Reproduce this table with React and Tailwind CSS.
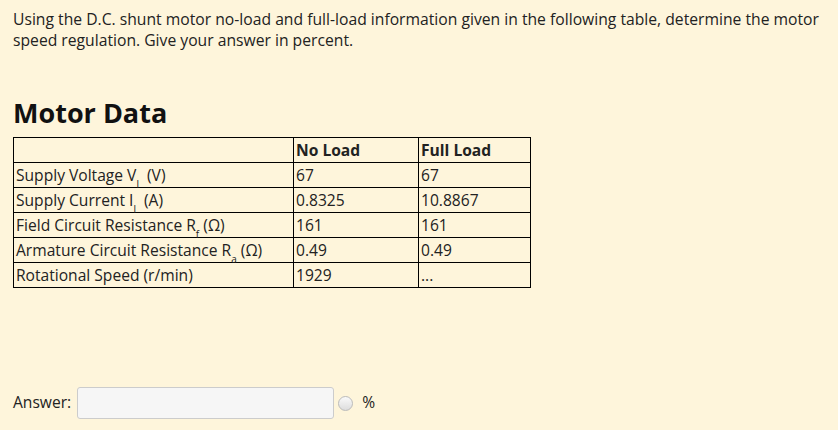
import React from 'react';

const rows = [
  { label: <>Supply Voltage V<sub className="text-[10px] align-[-4px] mr-1">l</sub> (V)</>, noLoad: '67', fullLoad: '67' },
  { label: <>Supply Current I<sub className="text-[10px] align-[-4px] mr-1">l</sub> (A)</>, noLoad: '0.8325', fullLoad: '10.8867' },
  { label: <>Field Circuit Resistance R<sub className="text-[10px] align-[-4px]">f</sub> (Ω)</>, noLoad: '161', fullLoad: '161' },
  { label: <>Armature Circuit Resistance R<sub className="text-[10px] align-[-4px]">a</sub> (Ω)</>, noLoad: '0.49', fullLoad: '0.49' },
  { label: 'Rotational Speed (r/min)', noLoad: '1929', fullLoad: '...' },
];

export default function App() {
  return (
    <div className="min-h-[430px] w-[838px] bg-[#fef5db] px-[13px] pt-[9px] font-['Open_Sans',sans-serif] text-[#222]">
      <p className="text-[15.7px] leading-[21px]">
        Using the D.C. shunt motor no-load and full-load information given in the following table, determine the motor speed regulation. Give your answer in percent.
      </p>

      <h2 className="mt-[46px] text-[27px] font-bold leading-[32px] text-[#111]">Motor Data</h2>

      <table className="mt-[8px] border-collapse text-[15.6px] leading-[24px]">
        <thead>
          <tr>
            <th className="w-[280px] border border-black px-[2px]"></th>
            <th className="w-[125px] border border-black px-[2px] text-left font-bold">No Load</th>
            <th className="w-[112px] border border-black px-[2px] text-left font-bold">Full Load</th>
          </tr>
        </thead>
        <tbody>
          {rows.map((row, i) => (
            <tr key={i}>
              <td className="border border-black px-[2px] whitespace-nowrap">{row.label}</td>
              <td className="border border-black px-[2px]">{row.noLoad}</td>
              <td className="border border-black px-[2px]">{row.fullLoad}</td>
            </tr>
          ))}
        </tbody>
      </table>

      <div className="mt-[99px] flex items-center">
        <span className="text-[15.6px]">Answer:</span>
        <input
          type="text"
          className="ml-[6px] h-[32px] w-[257px] rounded-[3px] border border-[#ccc] bg-[#f6f6f6]"
        />
        <span className="ml-[4px] h-[15px] w-[15px] rounded-full border border-[#bbb] bg-gradient-to-b from-[#fafafa] to-[#ddd]"></span>
        <span className="ml-[9px] text-[15.6px]">%</span>
      </div>
    </div>
  );
}
